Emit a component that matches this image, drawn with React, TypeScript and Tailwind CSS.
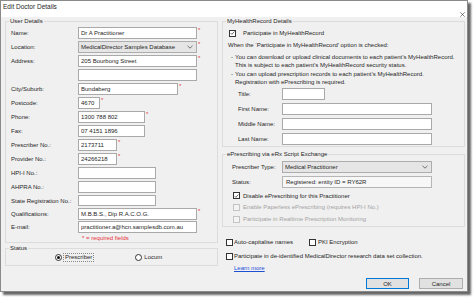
import type { ReactNode } from "react"

function Chevron() {
  return (
    <svg width="6" height="4" viewBox="0 0 6 4" className="shrink-0 mr-[3px]">
      <polyline points="0.5,0.8 3,3.2 5.5,0.8" fill="none" stroke="#555" strokeWidth="0.8" />
    </svg>
  )
}

function Box({ w, children, gray, chevron, h = "h-[12px]" }: { w: string; children?: ReactNode; gray?: boolean; chevron?: boolean; h?: string }) {
  return (
    <div
      className={`${w} ${h} shrink-0 border flex items-center pl-[2px] overflow-hidden whitespace-nowrap ${
        gray ? "bg-[#e5e5e5] border-[#adadad]" : "bg-white border-[#a9a9a9]"
      }`}
    >
      <span className="flex-1 overflow-hidden">{children}</span>
      {chevron && <Chevron />}
    </div>
  )
}

function Req() {
  return <span className="self-start text-[#e8333a] text-[6px] leading-[6px] ml-[1px] mt-[1px]">*</span>
}

function Row({ label, h = "h-[14px]", children, req }: { label: string; h?: string; children: ReactNode; req?: boolean }) {
  return (
    <div className={`flex items-center ${h}`}>
      <span className="w-[67px] shrink-0">{label}</span>
      {children}
      {req && <Req />}
    </div>
  )
}

function Check({ checked, disabled }: { checked?: boolean; disabled?: boolean }) {
  return (
    <span
      className={`w-[7px] h-[7px] shrink-0 border flex items-center justify-center ${
        disabled ? "border-[#c4c4c4] bg-[#f4f4f4]" : "border-[#333] bg-white"
      }`}
    >
      {checked && (
        <svg width="6" height="6" viewBox="0 0 6 6">
          <polyline points="0.8,3.1 2.3,4.6 5.2,1.2" fill="none" stroke="#222" strokeWidth="0.8" />
        </svg>
      )}
    </span>
  )
}

function Radio({ on }: { on?: boolean }) {
  return (
    <span className="w-[7px] h-[7px] shrink-0 rounded-full border border-[#333] bg-white flex items-center justify-center">
      {on && <span className="w-[3px] h-[3px] rounded-full bg-[#111]" />}
    </span>
  )
}

export default function App() {
  return (
    <div className="w-[474px] h-[299px] bg-white overflow-hidden font-['Liberation_Sans',Arial,sans-serif] text-[6px] leading-[8px] text-[#262626]">
      <div className="w-[468px] h-[292px] bg-[#f0f0f0] border border-[#8a8a8a] shadow-[3px_3px_2px_rgba(0,0,0,0.6)] flex flex-col">
        {/* Title bar */}
        <div className="h-[16px] shrink-0 bg-white flex justify-between">
          <span className="pl-[2px] pt-[2px] text-[6.5px] leading-[8px]">Edit Doctor Details</span>
          <svg width="5" height="5" viewBox="0 0 5 5" className="mr-[2px] mt-[11px]">
            <path d="M0.3 0.3 L4.7 4.7 M4.7 0.3 L0.3 4.7" stroke="#333" strokeWidth="0.6" />
          </svg>
        </div>

        <div className="flex flex-1 pl-[4px] gap-[4px]">
          {/* Left column */}
          <div className="w-[213px] flex flex-col">
            <fieldset className="border border-[#dcdcdc] px-[5px] pt-[1px]">
              <legend className="-ml-[2px] px-[1px] leading-[8px]">User Details</legend>
              <Row label="Name:" req>
                <Box w="w-[119px]">Dr A Practitioner</Box>
              </Row>
              <Row label="Location:" req>
                <Box w="w-[119px]" gray chevron>MedicalDirector Samples Database</Box>
              </Row>
              <Row label="Address:" req>
                <Box w="w-[119px]">205 Bourbong Street</Box>
              </Row>
              <Row label="">
                <Box w="w-[119px]" />
              </Row>
              <Row label="City/Suburb:" req>
                <Box w="w-[100px]">Bundaberg</Box>
              </Row>
              <Row label="Postcode:" req>
                <Box w="w-[22px]">4670</Box>
              </Row>
              <Row label="Phone:" req>
                <Box w="w-[67px]">1300 788 802</Box>
              </Row>
              <Row label="Fax:">
                <Box w="w-[67px]">07 4151 1896</Box>
              </Row>
              <Row label="Prescriber No.:" req>
                <Box w="w-[39px]">2173711</Box>
              </Row>
              <Row label="Provider No.:" req>
                <Box w="w-[39px]">24266218</Box>
              </Row>
              <Row label="HPI-I No.:">
                <Box w="w-[78px]" />
              </Row>
              <Row label="AHPRA No.:">
                <Box w="w-[78px]" />
              </Row>
              <Row label="State Registration No.:" h="h-[13px]">
                <Box w="w-[78px]" h="h-[11px]" />
              </Row>
              <Row label="Qualifications:" h="h-[13px]" req>
                <Box w="w-[119px]">M.B.B.S., Dip R.A.C.O.G.</Box>
              </Row>
              <Row label="E-mail:" h="h-[13px]">
                <Box w="w-[119px]">practitioner.a@hcn.samplesdb.com.au</Box>
              </Row>
              <div className="h-[9px] flex items-center pl-[71px] text-[#e8333a]">* = required fields</div>
            </fieldset>

            <fieldset className="mt-[1px] border border-[#dcdcdc] px-[5px] pb-[3px]">
              <legend className="-ml-[2px] px-[1px] leading-[8px]">Status</legend>
              <div className="h-[10px] flex items-center pl-[44px]">
                <Radio on />
                <span className="ml-[1px] px-[1px] h-[9px] flex items-center border border-dotted border-[#888]">Prescriber</span>
                <span className="ml-[41px]">
                  <Radio />
                </span>
                <span className="ml-[2px]">Locum</span>
              </div>
            </fieldset>
          </div>

          {/* Right column */}
          <div className="w-[243px] flex flex-col">
            <fieldset className="border border-[#dcdcdc] pl-[6px] pr-[4px]">
              <legend className="-ml-[3px] px-[1px] leading-[8px]">MyHealthRecord Details</legend>
              <div className="mt-[3px] h-[10px] flex items-center">
                <Check checked />
                <span className="ml-[7px]">Participate in MyHealthRecord</span>
              </div>
              <div className="mt-[3px] -ml-[1px] whitespace-nowrap">
                When the &lsquo;Participate in MyHealthRecord&rsquo; option is checked:
              </div>
              <div className="mt-[4px] flex whitespace-nowrap">
                <span className="w-[3px] ml-[2px] mr-[1px]">-</span>
                <div>
                  <div>You can download or upload clinical documents to each patient&rsquo;s MyHealthRecord.</div>
                  <div>This is subject to each patient&rsquo;s MyHealthRecord security status.</div>
                </div>
              </div>
              <div className="mt-[1px] flex whitespace-nowrap">
                <span className="w-[3px] ml-[2px] mr-[1px]">-</span>
                <div>
                  <div>You can upload prescription records to each patient&rsquo;s MyHealthRecord.</div>
                  <div>Registration with ePrescribing is required.</div>
                </div>
              </div>
              {[
                { label: "Title:", w: "w-[43px]" },
                { label: "First Name:", w: "w-[150px]" },
                { label: "Middle Name:", w: "w-[150px]" },
                { label: "Last Name:", w: "w-[150px]" },
              ].map((r) => (
                <div key={r.label} className="h-[15px] flex items-center pl-[9px]">
                  <span className="w-[44px] shrink-0">{r.label}</span>
                  <Box w={r.w} />
                </div>
              ))}
            </fieldset>

            <fieldset className="mt-[3px] border border-[#dcdcdc] pl-[3px] pr-[4px] pt-[2px] pb-[1px]">
              <legend className="px-[1px] leading-[8px]">ePrescribing via eRx Script Exchange</legend>
              <div className="h-[14px] flex items-center pl-[6px]">
                <span className="w-[50px] shrink-0">Prescriber Type:</span>
                <Box w="w-[150px]" gray chevron>Medical Practitioner</Box>
              </div>
              <div className="h-[16px] flex items-center pl-[6px]">
                <span className="w-[50px] shrink-0">Status:</span>
                <div className="w-[150px] h-[12px] border border-[#b5b5b5] bg-[#f7f7f7] flex items-center pl-[3px]">
                  Registered: entity ID = RY62R
                </div>
              </div>
              <div className="h-[11px] flex items-center pl-[7px]">
                <Check checked />
                <span className="ml-[3px]">Disable ePrescribing for this Practitioner</span>
              </div>
              <div className="h-[12px] flex items-center pl-[7px] text-[#a3a3a3]">
                <Check disabled />
                <span className="ml-[3px]">Enable Paperless ePrescribing (requires HPI-I No.)</span>
              </div>
              <div className="h-[12px] flex items-center pl-[7px] text-[#a3a3a3]">
                <Check disabled />
                <span className="ml-[3px]">Participate in Realtime Prescription Monitoring</span>
              </div>
            </fieldset>

            <div className="mt-[10px] h-[10px] flex items-center pl-[4px]">
              <Check />
              <span className="ml-[1px] w-[75px]">Auto-capitalise names</span>
              <Check />
              <span className="ml-[2px]">PKI Encryption</span>
            </div>
            <div className="mt-[4px] h-[10px] flex items-center pl-[4px] whitespace-nowrap">
              <Check />
              <span className="ml-[1px]">Participate in de-identified MedicalDirector research data set collection.</span>
            </div>
            <div className="mt-[3px] h-[8px] pl-[12px]">
              <span className="text-[#1a4fd6] underline">Learn more</span>
            </div>
            <div className="mt-[6px] flex justify-end gap-[10px] pr-[2px]">
              <button className="w-[43px] h-[11px] border border-[#0078d7] bg-[#e1e1e1] leading-[8px]">OK</button>
              <button className="w-[44px] h-[11px] border border-[#adadad] bg-[#e1e1e1] leading-[8px]">Cancel</button>
            </div>
          </div>
        </div>
      </div>
    </div>
  )
}
